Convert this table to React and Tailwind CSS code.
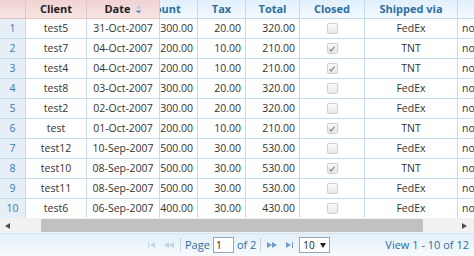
import React from 'react';

const rows = [
  { client: 'test5', date: '31-Oct-2007', amount: '300.00', tax: '20.00', total: '320.00', closed: false, ship: 'FedEx' },
  { client: 'test7', date: '04-Oct-2007', amount: '200.00', tax: '10.00', total: '210.00', closed: true, ship: 'TNT' },
  { client: 'test4', date: '04-Oct-2007', amount: '200.00', tax: '10.00', total: '210.00', closed: true, ship: 'TNT' },
  { client: 'test8', date: '03-Oct-2007', amount: '300.00', tax: '20.00', total: '320.00', closed: false, ship: 'FedEx' },
  { client: 'test2', date: '02-Oct-2007', amount: '300.00', tax: '20.00', total: '320.00', closed: false, ship: 'FedEx' },
  { client: 'test', date: '01-Oct-2007', amount: '200.00', tax: '10.00', total: '210.00', closed: true, ship: 'TNT' },
  { client: 'test12', date: '10-Sep-2007', amount: '500.00', tax: '30.00', total: '530.00', closed: false, ship: 'FedEx' },
  { client: 'test10', date: '08-Sep-2007', amount: '500.00', tax: '30.00', total: '530.00', closed: true, ship: 'TNT' },
  { client: 'test11', date: '08-Sep-2007', amount: '500.00', tax: '30.00', total: '530.00', closed: false, ship: 'FedEx' },
  { client: 'test6', date: '06-Sep-2007', amount: '400.00', tax: '30.00', total: '430.00', closed: false, ship: 'FedEx' },
];

// frozen part: rownum | client | date
const frozenCols = 'grid grid-cols-[26px_61px_73px]';
// scrolled part: amount | tax | total | closed | shipped via | notes
const scrollCols = 'grid grid-cols-[78px_48px_54px_65px_93px_100px]';

const cell = 'flex items-center h-[20px] border-r border-b border-[#c5dbec] px-1 overflow-hidden whitespace-nowrap';

const Checkbox = ({ checked }) => (
  <span className="flex items-center justify-center w-[11px] h-[11px] rounded-[2px] border border-[#cfcfcf] bg-gradient-to-b from-[#fafafa] to-[#e8e8e8]">
    {checked && (
      <svg width="8" height="8" viewBox="0 0 8 8">
        <path d="M1.5 4.2 L3.2 6 L6.6 1.6" fill="none" stroke="#909090" strokeWidth="1.4" />
      </svg>
    )}
  </span>
);

const Tri = ({ dir, color }) => (
  <svg width="5" height="6" viewBox="0 0 5 6">
    <path d={dir === 'left' ? 'M5 0 L0 3 L5 6 Z' : 'M0 0 L5 3 L0 6 Z'} fill={color} />
  </svg>
);

const PagerIcon = ({ kind, color }) => {
  if (kind === 'first') return <span className="flex items-center gap-[1px]"><span className="w-[1px] h-[6px]" style={{ background: color }} /><Tri dir="left" color={color} /></span>;
  if (kind === 'prev') return <span className="flex items-center"><Tri dir="left" color={color} /><Tri dir="left" color={color} /></span>;
  if (kind === 'next') return <span className="flex items-center"><Tri dir="right" color={color} /><Tri dir="right" color={color} /></span>;
  return <span className="flex items-center gap-[1px]"><Tri dir="right" color={color} /><span className="w-[1px] h-[6px]" style={{ background: color }} /></span>;
};

export default function App() {
  return (
    <div className="w-[474px] h-[256px] overflow-hidden bg-white text-[10.5px] text-[#333] font-['Open_Sans',sans-serif]">
      <div className="flex h-[218px] overflow-hidden">
        {/* frozen columns */}
        <div className="w-[160px] shrink-0">
          <div className={`${frozenCols} bg-gradient-to-b from-[#f0d2d2] to-[#f8e6e6] font-bold text-[#222] text-[11px]`}>
            <div className={`${cell} !h-[19px] border-[#e6c4c4]`} />
            <div className={`${cell} !h-[19px] border-[#e6c4c4] justify-center`}>Client</div>
            <div className={`${cell} !h-[19px] border-[#e6c4c4] justify-center gap-1`}>
              Date
              <svg width="7" height="9" viewBox="0 0 7 9">
                <path d="M0.5 3.5 L3.5 0.5 L6.5 3.5 Z" fill="#b9c9d8" />
                <path d="M0.5 5.5 L3.5 8.5 L6.5 5.5 Z" fill="#5b8fc0" />
              </svg>
            </div>
          </div>
          {rows.map((r, i) => (
            <div key={i} className={frozenCols}>
              <div className={`${cell} justify-center bg-[#e6eff8] text-[#3a78b0]`}>{i + 1}</div>
              <div className={`${cell} justify-center`}>{r.client}</div>
              <div className={`${cell} justify-center`}>{r.date}</div>
            </div>
          ))}
        </div>
        {/* scrolled columns */}
        <div className="flex-1 overflow-hidden">
          <div className="ml-[-40px] w-max">
            <div className={`${scrollCols} bg-gradient-to-b from-[#dfeffc] to-[#f5faff] font-bold text-[#2e6e9e] text-[11px]`}>
              {['Amount', 'Tax', 'Total', 'Closed', 'Shipped via', 'Notes'].map((h) => (
                <div key={h} className={`${cell} !h-[19px] border-[#c5dbec] justify-center`}>{h}</div>
              ))}
            </div>
            {rows.map((r, i) => (
              <div key={i} className={scrollCols}>
                <div className={`${cell} justify-end`}>{r.amount}</div>
                <div className={`${cell} justify-end`}>{r.tax}</div>
                <div className={`${cell} justify-end`}>{r.total}</div>
                <div className={`${cell} justify-center`}><Checkbox checked={r.closed} /></div>
                <div className={`${cell} justify-center`}>{r.ship}</div>
                <div className={cell}>note</div>
              </div>
            ))}
          </div>
        </div>
      </div>
      {/* horizontal scrollbar */}
      <div className="flex items-center h-[15px] bg-[#f1f1f1]">
        <div className="w-[41px] h-full flex items-center pl-[5px]">
          <Tri dir="left" color="#505050" />
        </div>
        <div className="w-[382px] h-[13px] bg-[#c1c1c1]" />
        <div className="flex-1 h-full flex items-center justify-end pr-[7px]">
          <Tri dir="right" color="#505050" />
        </div>
      </div>
      {/* pager */}
      <div className="flex items-center h-[23px] bg-gradient-to-b from-[#e3eff9] to-[#f6fafd] border-t border-[#d6e6f3] text-[#2e6e9e] text-[11px]">
        <div className="w-[148px]" />
        <div className="flex items-center gap-[9px]">
          <PagerIcon kind="first" color="#c2d3e2" />
          <PagerIcon kind="prev" color="#c2d3e2" />
        </div>
        <div className="w-[1px] h-[14px] bg-[#c5d6e6] ml-[6px] mr-[4px]" />
        <span>Page</span>
        <span className="ml-[3px] w-[21px] h-[16px] border border-[#9aa7b3] bg-white text-[#222] text-[10px] leading-[14px] pl-[2px]">1</span>
        <span className="ml-[3px]">of 2</span>
        <div className="w-[1px] h-[14px] bg-[#c5d6e6] ml-[4px] mr-[6px]" />
        <div className="flex items-center gap-[9px]">
          <PagerIcon kind="next" color="#6f9ccb" />
          <PagerIcon kind="last" color="#6f9ccb" />
        </div>
        <span className="ml-[6px] flex items-center justify-between w-[31px] h-[16px] border border-[#9aa7b3] bg-white text-[#222] text-[10px] px-[3px]">
          10
          <svg width="6" height="5" viewBox="0 0 6 5"><path d="M0 0 L6 0 L3 5 Z" fill="#222" /></svg>
        </span>
        <span className="ml-auto mr-[5px]">View 1 - 10 of 12</span>
      </div>
    </div>
  );
}
